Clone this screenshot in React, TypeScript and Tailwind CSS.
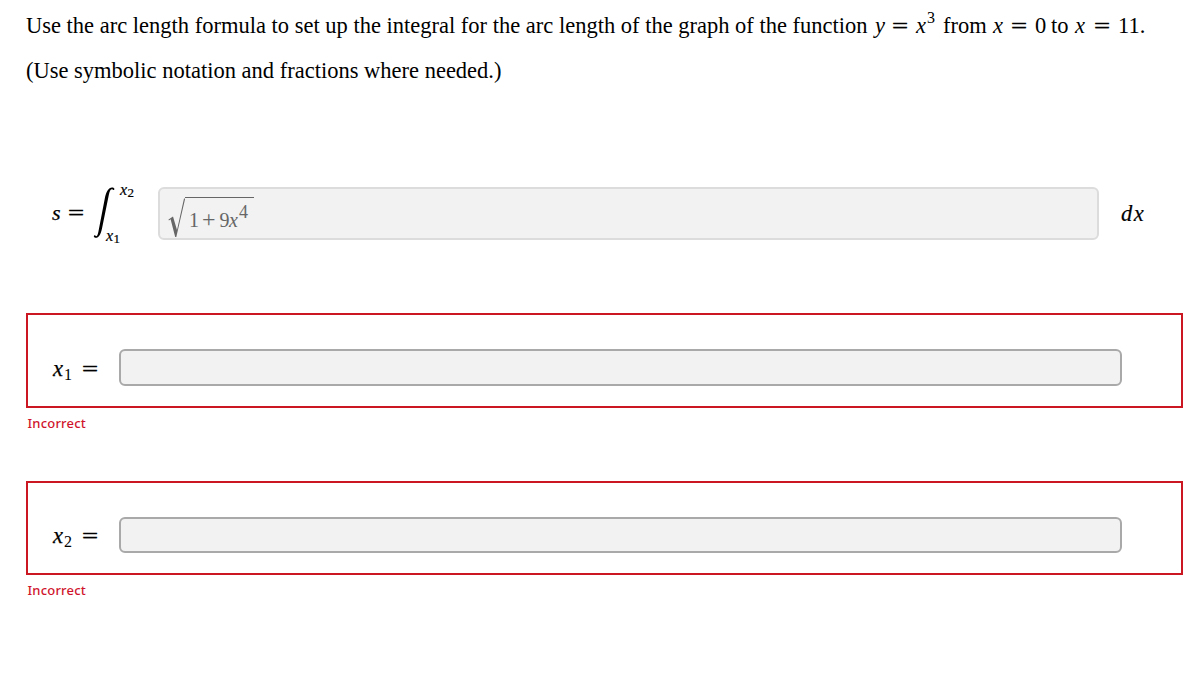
const SERIF = "font-['Liberation_Serif',serif]"

function Eq({ className }: { className: string }) {
  return (
    <span className={`inline-block origin-left scale-x-[1.3] [-webkit-text-stroke:0.45px_currentColor] ${className}`}>
      =
    </span>
  )
}

function Bound({ name, index }: { name: string; index: number }) {
  return (
    <span className="flex items-baseline text-[16px] leading-4 [-webkit-text-stroke:0.2px_currentColor]">
      <i className="w-[7.5px]">{name}</i>
      <span className="relative top-[2px] text-[13px]">{index}</span>
    </span>
  )
}

function Integral() {
  return (
    <div className="flex h-[60px] w-[65px]">
      <svg width="25" height="60" viewBox="0 0 25 60">
        <path d="M.8 51.3c0-1.200 1.600-1.300 2-.2 1.100.3 1.900-1 2.600-4.400L11.700 14C13.100 6.500 15.600 2.500 19 2.500c1.500 0 2.400.7 2.400 1.500 0 1.200-1.600 1.300-2 .2-1.600-.4-2.700 1.300-3.500 5.300L9 43.500C7.600 50 5.700 52.800 2.900 52.800 1.600 52.800.8 52.100.8 51.300z" />
      </svg>
      <div className="flex flex-col justify-between">
        <div className="-mt-[3px] pl-[2px]">
          <Bound name="x" index={2} />
        </div>
        <div className="-ml-[12px]">
          <Bound name="x" index={1} />
        </div>
      </div>
    </div>
  )
}

function Limit({ index, height, input, pad }: { index: number; height: string; input: string; pad: string }) {
  return (
    <section>
      <div className={`flex border-2 border-[#cb1722] ${height}`}>
        <div className={`flex w-[91px] items-baseline pl-[25px] text-[22.5px] leading-6 ${pad}`}>
          <i className="w-[11px] [-webkit-text-stroke:0.25px_currentColor]">x</i>
          <span className="relative top-1 w-[18px] text-[16px]">{index}</span>
          <Eq className="text-[22px]" />
        </div>
        <input
          disabled
          className={`mt-[34px] w-[1003px] rounded-md border-2 border-[#a9a9a9] bg-[#f2f2f2] ${input}`}
        />
      </div>
      <p className="pt-[5px] pl-[1.5px] font-['Noto_Sans',sans-serif] text-[13px] leading-5 font-medium tracking-[0.2px] text-[#d0142c]">
        Incorrect
      </p>
    </section>
  )
}

export default function App() {
  return (
    <main className={`h-[680px] w-[1183px] overflow-hidden bg-white pl-[26px] text-black ${SERIF}`}>
      <div className="pt-[3px] text-[22.5px] leading-[45px] whitespace-nowrap">
        <p className="flex h-[45px] items-baseline">
          <span className="w-[849px]">Use the arc length formula to set up the integral for the arc length of the graph of the function</span>
          <i className="w-[17px]">y</i>
          <Eq className="w-[24px] text-[22px]" />
          <i className="w-[11px]">x</i>
          <span className="relative -top-[10px] w-[16px] text-[16px] leading-4">3</span>
          <span className="w-[50px]">from</span>
          <i className="w-[18px]">x</i>
          <Eq className="w-[24px] text-[22px]" />
          <span className="w-[16px]">0</span>
          <span className="w-[24px]">to</span>
          <i className="w-[19px]">x</i>
          <Eq className="w-[24px] text-[22px]" />
          <span>11.</span>
        </p>
        <p>(Use symbolic notation and fractions where needed.)</p>
      </div>

      <div className="mt-[94px] flex h-[53px] pl-[26px]">
        <div className="flex w-[41px] items-baseline pt-[14px] text-[22px] leading-6">
          <i className="w-[16px] [-webkit-text-stroke:0.25px_currentColor]">s</i>
          <Eq className="" />
        </div>
        <div className="-mt-[2px] w-[65px]">
          <Integral />
        </div>
        <div className="flex w-[941px] rounded-md border-2 border-[#dcdcdc] bg-[#f2f2f2] pt-[8px] pl-[8px] text-[#666]">
          <svg width="17" height="42" viewBox="0 0 17 42" fill="#666">
            <path d="M.5 22.5 5 19.5 9 33 16 1.500h1.200L8.300 40H7.200L2.600 22.300.9 23.400z" />
          </svg>
          <div className="flex h-[33px] w-[69px] items-baseline border-t border-[#666] pl-[4px] text-[20px] leading-[45px]">
            <span className="w-[13px]">1</span>
            <span className="w-[17.5px] text-[24px] leading-4">+</span>
            <span className="w-[9.5px]">9</span>
            <i className="w-[10px]">x</i>
            <span className="relative -top-[9px] text-[18px] leading-4">4</span>
          </div>
        </div>
        <i className="pt-[15px] pl-[22px] text-[22.5px] leading-6 tracking-[1.5px] [-webkit-text-stroke:0.2px_currentColor]">
          dx
        </i>
      </div>

      <div className="mt-[73px]">
        <Limit index={1} height="h-[95px]" input="h-[37px]" pad="pt-[42px]" />
      </div>
      <div className="mt-[48px]">
        <Limit index={2} height="h-[94px]" input="h-[36px]" pad="pt-[41px]" />
      </div>
    </main>
  )
}
